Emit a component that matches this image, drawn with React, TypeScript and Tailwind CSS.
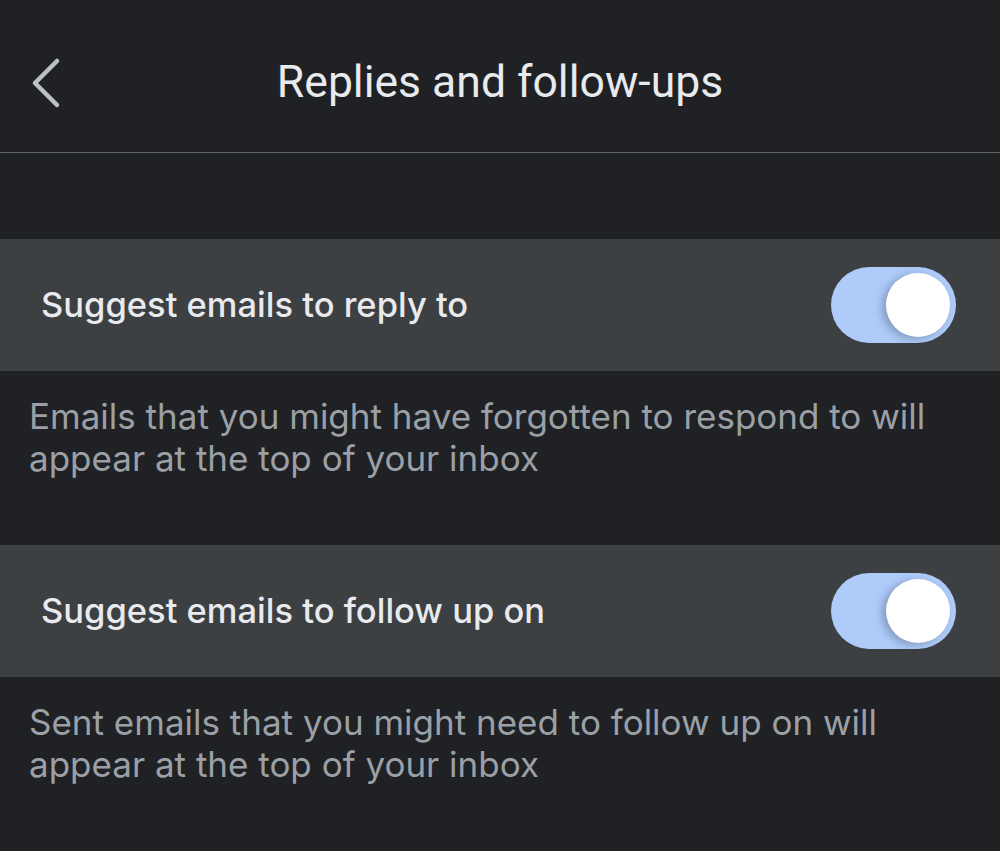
import React from "react";

function Toggle() {
  return (
    <div className="relative w-[125px] h-[76px] rounded-full bg-[#aecbfa] shrink-0">
      <div className="absolute right-[6px] top-[6px] w-[64px] h-[64px] rounded-full bg-white shadow-[-4px_2px_8px_rgba(0,0,0,0.25)]" />
    </div>
  );
}

function SettingRow({ label, desc }: { label: string; desc: string }) {
  return (
    <div>
      <div className="h-[132px] bg-[#3c4043] flex items-center justify-between pl-[41px] pr-[44px]">
        <span className="text-[34.5px] font-medium text-[#e8eaed]">{label}</span>
        <Toggle />
      </div>
      <div className="h-[174px] pl-[29px] pr-[40px] pt-[24px]">
        <p className="text-[35px] leading-[42px] text-[#9aa0a6]">{desc}</p>
      </div>
    </div>
  );
}

export default function App() {
  return (
    <div
      className="w-[1000px] h-[851px] bg-[#202124] overflow-hidden"
      style={{ fontFamily: "Inter, 'Noto Sans', sans-serif" }}
    >
      <header className="relative h-[153px] border-b border-[#5f6368] flex items-center justify-center pt-[12px]">
        <svg className="absolute left-[30px] top-[56px]" width="32" height="54" viewBox="0 0 32 54" fill="none">
          <path d="M27 5L5 27l22 22" stroke="#bdc1c6" strokeWidth="4.5" strokeLinecap="round" strokeLinejoin="round" />
        </svg>
        <h1
          className="text-[44.5px] text-[#e8eaed]"
          style={{ fontFamily: "Roboto, 'Open Sans', sans-serif" }}
        >
          Replies and follow-ups
        </h1>
      </header>
      <div className="h-[86px]" />
      <SettingRow
        label="Suggest emails to reply to"
        desc="Emails that you might have forgotten to respond to will appear at the top of your inbox"
      />
      <SettingRow
        label="Suggest emails to follow up on"
        desc="Sent emails that you might need to follow up on will appear at the top of your inbox"
      />
    </div>
  );
}
